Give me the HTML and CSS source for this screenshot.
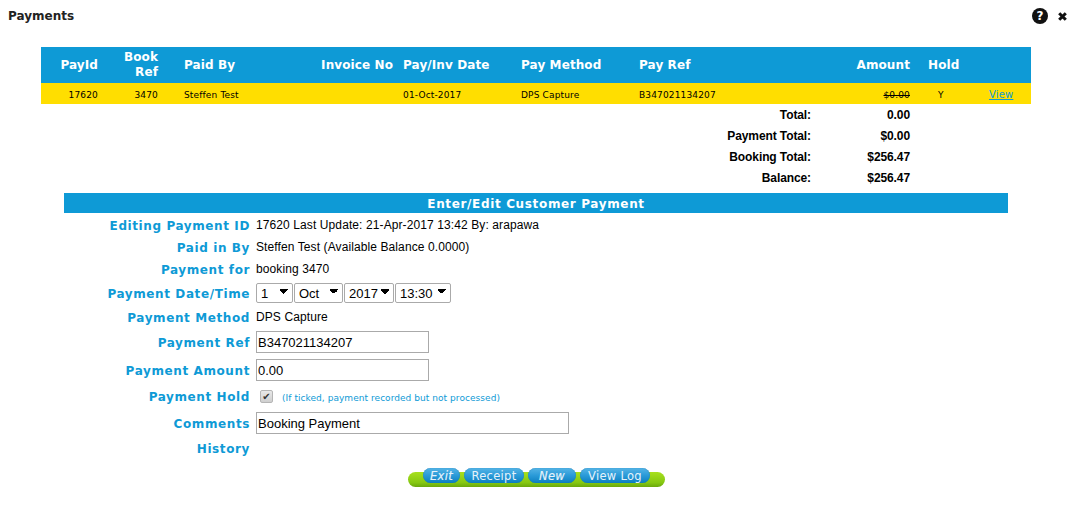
FILE: index.html
```html
<!DOCTYPE html>
<html lang="en">
  <head>
    <meta charset="UTF-8" />
    <title>Payments</title>
    <link rel="stylesheet" href="styles.css">
  </head>
  <body>
    <header class="title-bar">
      <h1>Payments</h1>
      <div class="title-icons">
        <span class="help-icon">?</span>
        <svg class="close-icon" width="9" height="9" viewBox="0 0 9 9">
          <path d="M1.2 1.2 7.8 7.8M7.8 1.2 1.2 7.8" stroke="#111" stroke-width="3" />
        </svg>
      </div>
    </header>

    <table class="pay-table">
      <colgroup>
        <col class="c-id" /><col class="c-book" /><col class="c-name" /><col class="c-inv" />
        <col class="c-date" /><col class="c-method" /><col class="c-ref" /><col class="c-amount" />
        <col class="c-hold" /><col class="c-view" />
      </colgroup>
      <thead>
        <tr>
          <th class="right">PayId</th>
          <th class="right">Book<br />Ref</th>
          <th class="name">Paid By</th>
          <th class="right">Invoice No</th>
          <th>Pay/Inv Date</th>
          <th>Pay Method</th>
          <th>Pay Ref</th>
          <th class="right">Amount</th>
          <th class="hold-head">Hold</th>
          <th></th>
        </tr>
      </thead>
      <tbody>
        <tr class="row-on">
          <td class="right">17620</td>
          <td class="right">3470</td>
          <td class="name">Steffen Test</td>
          <td></td>
          <td>01-Oct-2017</td>
          <td>DPS Capture</td>
          <td>B347021134207</td>
          <td class="right"><s>$0.00</s></td>
          <td class="hold">Y</td>
          <td><a href="#">View</a></td>
        </tr>
        <tr class="total"><td colspan="7" class="right">Total:</td><td class="right">0.00</td><td colspan="2"></td></tr>
        <tr class="total"><td colspan="7" class="right">Payment Total:</td><td class="right">$0.00</td><td colspan="2"></td></tr>
        <tr class="total"><td colspan="7" class="right">Booking Total:</td><td class="right">$256.47</td><td colspan="2"></td></tr>
        <tr class="total"><td colspan="7" class="right">Balance:</td><td class="right">$256.47</td><td colspan="2"></td></tr>
      </tbody>
    </table>

    <section class="edit-panel">
      <h2>Enter/Edit Customer Payment</h2>
      <form class="edit-form">
        <div class="form-row">
          <label>Editing Payment ID</label>
          <span>17620 Last Update: 21-Apr-2017 13:42 By: arapawa</span>
        </div>
        <div class="form-row">
          <label>Paid in By</label>
          <span>Steffen Test (Available Balance 0.0000)</span>
        </div>
        <div class="form-row">
          <label>Payment for</label>
          <span>booking 3470</span>
        </div>
        <div class="form-row row-select">
          <label>Payment Date/Time</label>
          <div class="selects">
            <select class="s-day"><option>1</option></select>
            <select class="s-month"><option>Oct</option></select>
            <select class="s-year"><option>2017</option></select>
            <select class="s-time"><option>13:30</option></select>
          </div>
        </div>
        <div class="form-row">
          <label>Payment Method</label>
          <span>DPS Capture</span>
        </div>
        <div class="form-row row-input">
          <label>Payment Ref</label>
          <input type="text" value="B347021134207" />
        </div>
        <div class="form-row row-input row-amount">
          <label>Payment Amount</label>
          <input type="text" value="0.00" />
        </div>
        <div class="form-row row-hold">
          <label>Payment Hold</label>
          <div class="hold-box">
            <input type="checkbox" checked disabled />
            <small>(If ticked, payment recorded but not processed)</small>
          </div>
        </div>
        <div class="form-row row-input row-comments">
          <label>Comments</label>
          <input type="text" class="wide" value="Booking Payment" />
        </div>
        <div class="form-row row-history">
          <label>History</label>
        </div>
      </form>
    </section>

    <div class="button-bar">
      <button type="button" class="em b-exit">Exit</button>
      <button type="button" class="b-receipt">Receipt</button>
      <button type="button" class="em b-new">New</button>
      <button type="button" class="b-log">View Log</button>
    </div>
  </body>
</html>
```

FILE: styles.css
```css
body {
  margin: 0;
  font-family: "Liberation Sans", Arial, sans-serif;
  font-size: 12px;
  color: #000;
  background: #fff;
}
.title-bar {
  display: flex;
  justify-content: space-between;
  align-items: center;
  height: 32px;
  padding: 0 8px;
}
h1 {
  margin: 0;
  font-family: "DejaVu Sans", sans-serif;
  font-size: 12px;
  font-weight: bold;
  color: #222;
}
.title-icons {
  display: flex;
  align-items: center;
  gap: 10px;
  margin-right: 2px;
}
.help-icon {
  width: 16px;
  height: 16px;
  border-radius: 50%;
  background: #111;
  color: #fff;
  font: bold 12px/16px "DejaVu Sans", sans-serif;
  text-align: center;
}

.pay-table {
  width: 990px;
  margin: 15px 0 0 41px;
  border-collapse: collapse;
  table-layout: fixed;
}
.c-id { width: 62px; }
.c-book { width: 60px; }
.c-name { width: 118px; }
.c-inv { width: 117px; }
.c-date { width: 118px; }
.c-method { width: 118px; }
.c-ref { width: 182px; }
.c-amount { width: 99px; }
.c-hold { width: 69px; }
.c-view { width: 47px; }
.pay-table th,
.pay-table td {
  padding: 0 5px;
  text-align: left;
}
.pay-table th {
  height: 36px;
  background: #0e9ad6;
  color: #fff;
  font: bold 12px/15px "DejaVu Sans", sans-serif;
  letter-spacing: 0.1px;
}
.pay-table .right {
  text-align: right;
}
.pay-table .name {
  padding-left: 21px;
}
.pay-table .hold-head {
  padding-left: 13px;
}
.row-on td {
  height: 19px;
  padding-top: 2px;
  background: #ffde00;
  font: 9px "DejaVu Sans", sans-serif;
  letter-spacing: 0.15px;
}
.pay-table .hold {
  padding-left: 23px;
}
.row-on a {
  color: #0e9ad6;
  font-size: 10px;
}
.total td {
  height: 21px;
  font-weight: bold;
  letter-spacing: -0.1px;
}

.edit-panel {
  margin: 5px 69px 0 64px;
}
h2 {
  margin: 0;
  height: 20px;
  background: #0e9ad6;
  color: #fff;
  font: bold 12px/22px "DejaVu Sans", sans-serif;
  letter-spacing: 0.65px;
  text-align: center;
}
.edit-form {
  padding-top: 2px;
}
.form-row {
  display: grid;
  grid-template-columns: 186px 1fr;
  column-gap: 6px;
  align-items: center;
  min-height: 22px;
}
.form-row label {
  font: bold 12px "DejaVu Sans", sans-serif;
  letter-spacing: 0.6px;
  color: #0e9ad6;
  text-align: right;
}
.form-row span {
  margin-bottom: 2px;
  letter-spacing: 0.1px;
}
.row-select {
  min-height: 26px;
}
.selects {
  display: flex;
  gap: 1px;
  margin-bottom: 2px;
}
select {
  appearance: none;
  height: 20px;
  padding: 0 0 0 4px;
  border: 1px solid #aaa;
  border-radius: 2px;
  font: 13px "Liberation Sans", sans-serif;
  color: #000;
  background-color: #fff;
  background-image: linear-gradient(45deg, transparent 50%, #000 50%), linear-gradient(-45deg, transparent 50%, #000 50%);
  background-size: 4px 6px, 4px 6px;
  background-position: right 8px top 5px, right 4px top 5px;
  background-repeat: no-repeat;
}
.s-day { width: 37px; }
.s-month { width: 49px; }
.s-year { width: 50px; }
.s-time { width: 56px; }
.row-input {
  min-height: 26px;
}
.row-input label,
.row-hold label,
.row-history label {
  padding-top: 2px;
}
.row-amount {
  min-height: 22px;
  padding: 4px 0 2px;
}
.row-comments {
  min-height: 28px;
}
.row-input input {
  box-sizing: border-box;
  width: 173px;
  height: 22px;
  padding: 0 1px;
  border: 1px solid #aaa;
  font: 13px "Liberation Sans", sans-serif;
}
.row-input .wide {
  width: 313px;
}
.row-hold {
  min-height: 26px;
}
.hold-box {
  display: flex;
  align-items: center;
  gap: 9px;
}
.hold-box input {
  appearance: none;
  box-sizing: border-box;
  width: 13px;
  height: 13px;
  margin: 0 0 0 4px;
  border: 1px solid #b5b5b5;
  border-radius: 2px;
  background: linear-gradient(#e8e8e8, #cfcfcf);
  color: #333;
  font: 10px/11px "DejaVu Sans", sans-serif;
  text-align: center;
}
.hold-box input::after {
  content: "\2714";
}
.hold-box small {
  padding-top: 3px;
  font: 9px "DejaVu Sans", sans-serif;
  letter-spacing: 0.05px;
  color: #0e9ad6;
}

.button-bar {
  display: flex;
  gap: 4px;
  width: 228px;
  height: 15px;
  margin: 13px 0 0 408px;
  padding: 0 14px 0 15px;
  border-radius: 8px;
  background: linear-gradient(#a8e01e, #86c812 70%, #6aa80c);
}
.button-bar button {
  height: 15px;
  margin-top: -4px;
  padding: 0;
  border: 0;
  border-radius: 8px;
  background: linear-gradient(#55b4e6, #2a9ad8 50%, #0c7fc0);
  box-shadow: inset 0 0 1px #0a6ea8;
  color: #e6f3fb;
  font: 11.5px "DejaVu Sans", sans-serif;
  letter-spacing: 0.3px;
  cursor: pointer;
}
.button-bar .em {
  font-style: italic;
  -webkit-text-stroke: 0.15px #e6f3fb;
}
.b-exit { width: 37px; }
.b-receipt { width: 60px; }
.b-new { width: 48px; }
.b-log { width: 70px; }
```
